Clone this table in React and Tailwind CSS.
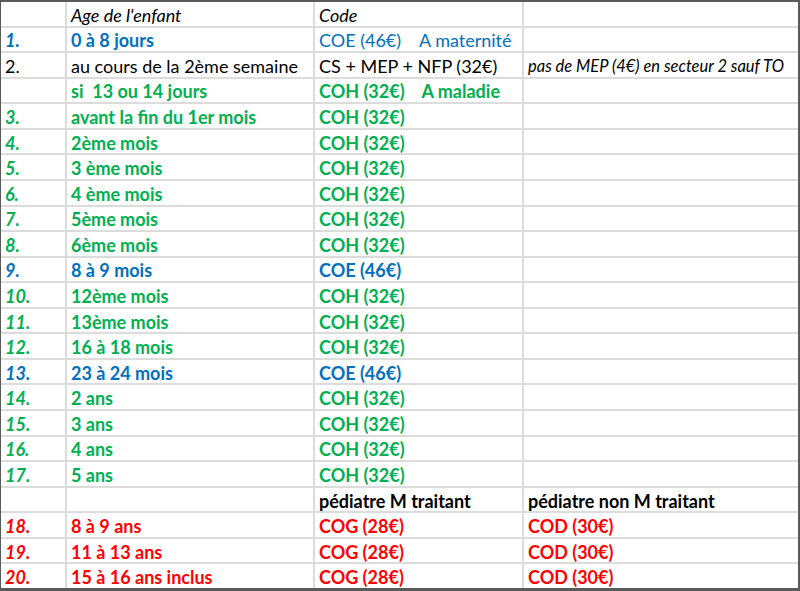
const BLUE = 'text-[#0070c0]'
const GREEN = 'text-[#00b050]'
const RED = 'text-[#ff0000]'
const BLACK = 'text-black'

const rows = [
  { n: '', age: "Age de l'enfant", code: 'Code', extra: '', color: BLACK, head: true },
  { n: '1.', age: '0 à 8 jours', code: 'COE (46€)\u00a0\u00a0\u00a0\u00a0A maternité', extra: '', color: BLUE, codeLight: true },
  { n: '2.', age: 'au cours de la 2ème semaine', code: 'CS + MEP + NFP (32€)', extra: 'pas de MEP (4€) en secteur 2 sauf TO', color: BLACK, plain: true },
  { n: '', age: 'si\u00a0 13 ou 14 jours', code: 'COH (32€)\u00a0\u00a0\u00a0\u00a0A maladie', extra: '', color: GREEN },
  { n: '3.', age: 'avant la fin du 1er mois', code: 'COH (32€)', color: GREEN },
  { n: '4.', age: '2ème mois', code: 'COH (32€)', color: GREEN },
  { n: '5.', age: '3 ème mois', code: 'COH (32€)', color: GREEN },
  { n: '6.', age: '4 ème mois', code: 'COH (32€)', color: GREEN },
  { n: '7.', age: '5ème mois', code: 'COH (32€)', color: GREEN },
  { n: '8.', age: '6ème mois', code: 'COH (32€)', color: GREEN },
  { n: '9.', age: '8 à 9 mois', code: 'COE (46€)', color: BLUE },
  { n: '10.', age: '12ème mois', code: 'COH (32€)', color: GREEN },
  { n: '11.', age: '13ème mois', code: 'COH (32€)', color: GREEN },
  { n: '12.', age: '16 à 18 mois', code: 'COH (32€)', color: GREEN },
  { n: '13.', age: '23 à 24 mois', code: 'COE (46€)', color: BLUE },
  { n: '14.', age: '2 ans', code: 'COH (32€)', color: GREEN },
  { n: '15.', age: '3 ans', code: 'COH (32€)', color: GREEN },
  { n: '16.', age: '4 ans', code: 'COH (32€)', color: GREEN },
  { n: '17.', age: '5 ans', code: 'COH (32€)', color: GREEN },
  { n: '', age: '', code: 'pédiatre M traitant', extra: 'pédiatre non M traitant', color: BLACK, sub: true },
  { n: '18.', age: '8 à 9 ans', code: 'COG (28€)', extra: 'COD (30€)', color: RED },
  { n: '19.', age: '11 à 13 ans', code: 'COG (28€)', extra: 'COD (30€)', color: RED },
  { n: '20.', age: '15 à 16 ans inclus', code: 'COG (28€)', extra: 'COD (30€)', color: RED },
]

function Cell({ children, className = '' }) {
  return (
    <div className={`flex items-center overflow-hidden whitespace-nowrap bg-white pl-[4px] pt-[2px] ${className}`}>
      {children}
    </div>
  )
}

export default function App() {
  return (
    <div className="h-[591px] w-[800px] border-b-[3px] border-l border-r-2 border-t-2 border-[#5a5a5a] bg-white font-['Lato',sans-serif] text-[18px] leading-none">
      <div className="grid h-full grid-cols-[64px_246px_207px_1fr] grid-rows-[repeat(23,minmax(0,1fr))] gap-[2px] bg-[#dcdcdc]">
        {rows.map((r, i) => {
          const bold = !r.plain && !r.head
          return [
            <Cell key={`n${i}`} className={`${r.color} ${r.plain ? '' : 'italic'} ${bold && !r.sub ? 'font-bold' : ''}`}>
              {r.n}
            </Cell>,
            <Cell key={`a${i}`} className={`${r.color} ${r.head ? 'italic' : ''} ${bold ? 'font-bold' : ''}`}>
              {r.age}
            </Cell>,
            <Cell key={`c${i}`} className={`${r.color} ${r.head ? 'italic' : ''} ${bold && !r.codeLight ? 'font-bold' : ''}`}>
              {r.code}
            </Cell>,
            <Cell
              key={`e${i}`}
              className={r.plain ? 'text-[16.5px] italic text-black' : `${r.color} font-bold`}
            >
              {r.extra}
            </Cell>,
          ]
        })}
      </div>
    </div>
  )
}
